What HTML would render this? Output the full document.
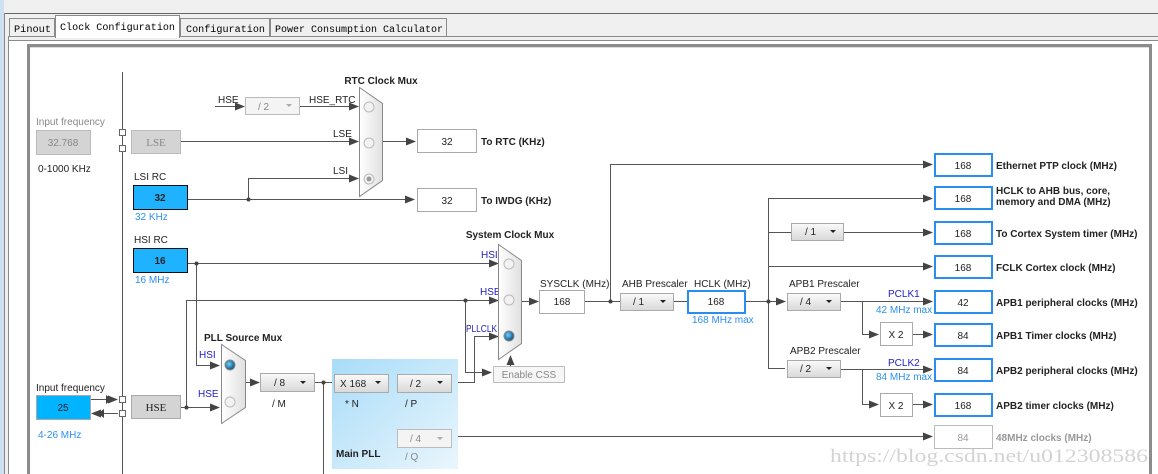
<!DOCTYPE html>
<html><head><meta charset="utf-8"><style>
body{margin:0;width:1158px;height:474px;overflow:hidden;background:#f0f0f0;}
svg{display:block}
.t{font-family:"Liberation Sans",sans-serif;font-size:10px;fill:#222}
.b{font-weight:bold}
.tab{font-family:"Liberation Mono",monospace;font-size:10px;fill:#000}
.g{fill:#888}
.bl{fill:#2b8ff0}
.pu{fill:#2020c0}
</style></head><body>
<svg width="1158" height="474" viewBox="0 0 1158 474">
<defs>
<marker id="a" markerWidth="10" markerHeight="8" refX="9" refY="4" orient="auto" markerUnits="userSpaceOnUse"><path d="M0,0 L10,4 L0,8z" fill="#444"/></marker>
<linearGradient id="dd" x1="0" y1="0" x2="0" y2="1"><stop offset="0" stop-color="#fafafa"/><stop offset="1" stop-color="#d8d8d8"/></linearGradient>
<linearGradient id="pll" x1="0" y1="0" x2="1" y2="1"><stop offset="0" stop-color="#a8dcf8"/><stop offset="1" stop-color="#eaf6fd"/></linearGradient>
<linearGradient id="mux" x1="0" y1="0" x2="1" y2="0"><stop offset="0" stop-color="#ffffff"/><stop offset="1" stop-color="#e0e0e0"/></linearGradient>
<radialGradient id="rb" cx="0.4" cy="0.4" r="0.6"><stop offset="0" stop-color="#6fd0ff"/><stop offset="1" stop-color="#0a5080"/></radialGradient>
</defs>
<rect x="0" y="0" width="1158" height="474" fill="#f0f0f0"/>
<line x1="5" y1="13.5" x2="1158" y2="13.5" stroke="#666"/>
<rect x="0" y="0" width="4" height="474" fill="#cfe0f0"/>
<line x1="4.5" y1="13" x2="4.5" y2="474" stroke="#888"/>
<line x1="8" y1="36.5" x2="1158" y2="36.5" stroke="#8a8a8a"/>
<line x1="8" y1="40.5" x2="1158" y2="40.5" stroke="#8a8a8a"/>
<rect x="8" y="41" width="1150" height="433" fill="#fff"/>
<line x1="8.5" y1="37" x2="8.5" y2="474" stroke="#8a8a8a"/>
<rect x="9.5" y="18.5" width="45" height="18" fill="#f0f0f0" stroke="#8a8a8a"/>
<text class="tab" x="14" y="32" textLength="37" lengthAdjust="spacingAndGlyphs">Pinout</text>
<rect x="55.5" y="15.5" width="124" height="22" fill="#fff" stroke="#8a8a8a"/>
<line x1="56" y1="37" x2="179" y2="37" stroke="#fff" stroke-width="2"/>
<text class="tab" x="60" y="30" textLength="115" lengthAdjust="spacingAndGlyphs">Clock Configuration</text>
<rect x="180.5" y="18.5" width="89" height="18" fill="#f0f0f0" stroke="#8a8a8a"/>
<text class="tab" x="186" y="32" textLength="79" lengthAdjust="spacingAndGlyphs">Configuration</text>
<rect x="270.5" y="18.5" width="176" height="18" fill="#f0f0f0" stroke="#8a8a8a"/>
<text class="tab" x="275" y="32" textLength="168" lengthAdjust="spacingAndGlyphs">Power Consumption Calculator</text>
<path d="M28.5,474 V45.5 H1150.5 V474" fill="none" stroke="#8c8c8c" stroke-width="3"/>
<line x1="30" y1="47.5" x2="1149" y2="47.5" stroke="#ddd"/>

<g fill="none" stroke="#555" stroke-width="1">
<line x1="122.5" y1="72" x2="122.5" y2="474"/>
<line x1="215" y1="106.5" x2="244" y2="106.5" marker-end="url(#a)"/>
<line x1="300" y1="106.5" x2="358" y2="106.5" marker-end="url(#a)"/>
<line x1="181" y1="141.5" x2="358" y2="141.5" marker-end="url(#a)"/>
<line x1="188" y1="199.5" x2="414" y2="199.5" marker-end="url(#a)"/>
<polyline points="248.5,199 248.5,178.5 358,178.5" marker-end="url(#a)"/>
<line x1="383" y1="141.5" x2="415" y2="141.5" marker-end="url(#a)"/>
<line x1="188" y1="263.5" x2="498" y2="263.5" marker-end="url(#a)"/>
<polyline points="196.5,263 196.5,365.5 219,365.5" marker-end="url(#a)"/>
<polyline points="186.5,407 186.5,300.5 498,300.5" marker-end="url(#a)"/>
<line x1="181" y1="407.5" x2="219" y2="407.5" marker-end="url(#a)"/>
<polyline points="465.5,300 465.5,372.5 491,372.5" marker-end="url(#a)"/>
<polyline points="452,382.5 474.5,382.5 474.5,336.5 498,336.5" marker-end="url(#a)"/>
<line x1="510.5" y1="366" x2="510.5" y2="356" marker-end="url(#a)"/>
<line x1="522" y1="301.5" x2="538" y2="301.5" marker-end="url(#a)"/>
<line x1="246" y1="382.5" x2="259" y2="382.5" marker-end="url(#a)"/>
<line x1="315" y1="382.5" x2="334" y2="382.5"/>
<line x1="323.5" y1="382" x2="323.5" y2="474"/>
<line x1="389" y1="382.5" x2="397" y2="382.5"/>
<polyline points="390.5,382 390.5,438.5 397,438.5"/>
<line x1="452" y1="436.5" x2="932" y2="436.5" marker-end="url(#a)"/>
<line x1="585" y1="301.5" x2="620" y2="301.5"/>
<polyline points="610.5,301 610.5,164.5 932,164.5" marker-end="url(#a)"/>
<line x1="674" y1="301.5" x2="687" y2="301.5"/>
<line x1="746" y1="301.5" x2="785" y2="301.5" marker-end="url(#a)"/>
<polyline points="785,368.5 768.5,368.5 768.5,198.5 932,198.5" marker-end="url(#a)"/>
<line x1="768" y1="232.5" x2="791" y2="232.5"/>
<line x1="844" y1="232.5" x2="932" y2="232.5" marker-end="url(#a)"/>
<line x1="768" y1="266.5" x2="932" y2="266.5" marker-end="url(#a)"/>
<line x1="841" y1="301.5" x2="932" y2="301.5" marker-end="url(#a)"/>
<polyline points="862.5,301 862.5,334.5 878,334.5" marker-end="url(#a)"/>
<line x1="913" y1="334.5" x2="932" y2="334.5" marker-end="url(#a)"/>
<line x1="841" y1="369.5" x2="932" y2="369.5" marker-end="url(#a)"/>
<polyline points="862.5,369 862.5,404.5 878,404.5" marker-end="url(#a)"/>
<line x1="913" y1="404.5" x2="932" y2="404.5" marker-end="url(#a)"/>
<line x1="91" y1="399.5" x2="117" y2="399.5" marker-end="url(#a)"/>
<line x1="118" y1="413.5" x2="92" y2="413.5" marker-end="url(#a)"/>
</g>
<g fill="#444">
<circle cx="248.5" cy="199.5" r="2"/><circle cx="196.5" cy="263.5" r="2"/><circle cx="186.5" cy="407.5" r="2"/>
<circle cx="465.5" cy="300.5" r="2"/><circle cx="323.5" cy="382.5" r="2"/><circle cx="610.5" cy="301.5" r="2"/><circle cx="768.5" cy="301.5" r="2"/>
<path d="M106,395 L112,399.5 L106,404z"/><path d="M104,409 L98,413.5 L104,418z"/>
</g>
<g fill="#fff" stroke="#666"><rect x="119.5" y="129.5" width="6" height="6"/><rect x="119.5" y="145.5" width="6" height="6"/><rect x="119.5" y="396.5" width="6" height="6"/><rect x="119.5" y="410.5" width="6" height="6"/></g>

<text class="t g" x="36" y="125" font-size="9">Input frequency</text>
<rect x="36.5" y="130.5" width="54" height="24" fill="#d4d4d4" stroke="#bbb"/>
<text class="t g" x="63" y="146" text-anchor="middle" font-size="9">32.768</text>
<text class="t" x="38" y="172" font-size="9" fill="#555">0-1000 KHz</text>
<rect x="131.5" y="130.5" width="49" height="23" fill="#d4d4d4" stroke="#bbb"/>
<text x="156" y="146" text-anchor="middle" font-family="Liberation Serif,serif" font-size="11" fill="#888">LSE</text>
<text class="t" x="134" y="180">LSI RC</text>
<rect x="133.5" y="185.5" width="54" height="24" fill="#1eb2ff" stroke="#111"/>
<text class="t b" x="160" y="201" text-anchor="middle" font-family="Liberation Serif,serif">32</text>
<text class="t bl" x="135" y="220" font-size="9">32 KHz</text>
<text class="t" x="134" y="243">HSI RC</text>
<rect x="133.5" y="248.5" width="54" height="24" fill="#1eb2ff" stroke="#111"/>
<text class="t b" x="160" y="264" text-anchor="middle" font-family="Liberation Serif,serif">16</text>
<text class="t bl" x="135" y="283" font-size="9">16 MHz</text>
<text class="t" x="36" y="391" font-size="9">Input frequency</text>
<rect x="36.5" y="395.5" width="54" height="24" fill="#00b4ff" stroke="#aaa"/>
<text class="t" x="63" y="411" text-anchor="middle">25</text>
<text class="t bl" x="38" y="438" font-size="9">4-26 MHz</text>
<rect x="131.5" y="395.5" width="49" height="23" fill="#d4d4d4" stroke="#aaa"/>
<text x="156" y="411" text-anchor="middle" font-family="Liberation Serif,serif" font-size="11" fill="#222">HSE</text>

<text class="t" x="218" y="103" font-size="9">HSE</text>
<rect x="245.5" y="97.5" width="54" height="17" fill="#f4f4f4" stroke="#bbb"/>
<text class="t g" x="258" y="110">/ 2</text><path d="M286,104 l6,0 l-3,3z" fill="#aaa"/>
<text class="t" x="309" y="103" font-size="9">HSE_RTC</text>
<text class="t" x="333" y="137" font-size="9">LSE</text><text class="t" x="333" y="174" font-size="9">LSI</text>
<text class="t b" x="381" y="84" text-anchor="middle" fill="#555" font-size="9">RTC Clock Mux</text>
<path d="M359.5,87.5 L382.5,103.5 L382.5,180.5 L359.5,196.5z" fill="url(#mux)" stroke="#888"/>
<g stroke="#bbb" fill="#f2f2f2"><circle cx="369" cy="107" r="5"/><circle cx="369" cy="143" r="5"/><circle cx="369" cy="179" r="5"/></g><circle cx="369" cy="179" r="2.5" fill="#999"/>
<rect x="417.5" y="129.5" width="59" height="23" fill="#fff" stroke="#aaa"/><text class="t" x="447" y="145" text-anchor="middle" font-size="9">32</text>
<text class="t b" x="481" y="145" fill="#555" font-size="9">To RTC (KHz)</text>
<rect x="417.5" y="188.5" width="59" height="23" fill="#fff" stroke="#aaa"/><text class="t" x="447" y="204" text-anchor="middle" font-size="9">32</text>
<text class="t b" x="481" y="204" fill="#555" font-size="9">To IWDG (KHz)</text>

<text class="t b" x="510" y="238" text-anchor="middle" font-size="9">System Clock Mux</text>
<text class="t pu" x="481" y="258" font-size="9">HSI</text><text class="t pu" x="480" y="295" font-size="9">HSE</text><text class="t pu" x="466" y="332" font-size="9" textLength="31" lengthAdjust="spacingAndGlyphs">PLLCLK</text>
<path d="M498.5,244.5 L521.5,260.5 L521.5,343.5 L498.5,359.5z" fill="url(#mux)" stroke="#888"/>
<g stroke="#bbb" fill="#f2f2f2"><circle cx="509" cy="264" r="5"/><circle cx="509" cy="300" r="5"/></g>
<circle cx="509" cy="336" r="5" fill="url(#rb)" stroke="#888"/>
<rect x="493.5" y="366.5" width="71" height="16" fill="#f6f6f6" stroke="#bbb" rx="1"/><text class="t g" x="529" y="378" text-anchor="middle" font-size="9">Enable CSS</text>

<text class="t b" x="204" y="341" font-size="9">PLL Source Mux</text>
<text class="t pu" x="199" y="358" font-size="9">HSI</text><text class="t pu" x="198" y="397" font-size="9">HSE</text>
<path d="M221.5,344.5 L245.5,360.5 L245.5,407.5 L221.5,423.5z" fill="url(#mux)" stroke="#888"/>
<circle cx="230" cy="365" r="5" fill="url(#rb)" stroke="#888"/><circle cx="230" cy="402" r="5" fill="#f2f2f2" stroke="#bbb"/>
<rect x="260.5" y="373.5" width="54" height="18" fill="url(#dd)" stroke="#aaa"/><text class="t" x="274" y="386">/ 8</text><path d="M300,381 l6,0 l-3,3z" fill="#222"/>
<text class="t" x="272" y="407">/ M</text>
<rect x="332" y="359" width="126" height="110" fill="url(#pll)"/>
<rect x="334.5" y="374.5" width="54" height="18" fill="url(#dd)" stroke="#aaa"/><text class="t" x="340" y="387">X 168</text><path d="M375,381 l6,0 l-3,3z" fill="#222"/>
<text class="t" x="345" y="407">* N</text>
<rect x="397.5" y="374.5" width="54" height="18" fill="url(#dd)" stroke="#aaa"/><text class="t" x="410" y="387">/ 2</text><path d="M437,381 l6,0 l-3,3z" fill="#222"/>
<text class="t" x="405" y="407">/ P</text>
<rect x="397.5" y="429.5" width="54" height="18" fill="#f4f4f4" stroke="#bbb"/><text class="t g" x="410" y="442">/ 4</text><path d="M437,437 l6,0 l-3,3z" fill="#aaa"/>
<text class="t g" x="405" y="460">/ Q</text>
<text class="t b" x="336" y="457">Main PLL</text>

<text class="t" x="540" y="287" font-size="9">SYSCLK (MHz)</text>
<rect x="539.5" y="290.5" width="45" height="23" fill="#fff" stroke="#aaa"/><text class="t" x="562" y="305" text-anchor="middle" font-size="9">168</text>
<text class="t" x="622" y="287" font-size="9">AHB Prescaler</text>
<rect x="620.5" y="293.5" width="53" height="17" fill="url(#dd)" stroke="#aaa"/><text class="t" x="633" y="305">/ 1</text><path d="M660,300 l6,0 l-3,3z" fill="#222"/>
<text class="t" x="694" y="287" font-size="9">HCLK (MHz)</text>
<rect x="688" y="291" width="57" height="22" fill="#fff" stroke="#2a8ef0" stroke-width="2"/><text class="t" x="716" y="305" text-anchor="middle" font-size="9">168</text>
<text class="t bl" x="692" y="323" font-size="9">168 MHz max</text>
<rect x="791.5" y="223.5" width="52" height="17" fill="url(#dd)" stroke="#aaa"/><text class="t" x="805" y="235">/ 1</text><path d="M830,230 l6,0 l-3,3z" fill="#222"/>
<text class="t" x="789" y="287" font-size="9">APB1 Prescaler</text>
<rect x="787.5" y="293.5" width="53" height="17" fill="url(#dd)" stroke="#aaa"/><text class="t" x="800" y="305">/ 4</text><path d="M826,300 l6,0 l-3,3z" fill="#222"/>
<text class="t" x="790" y="354" font-size="9">APB2 Prescaler</text>
<rect x="787.5" y="360.5" width="53" height="17" fill="url(#dd)" stroke="#aaa"/><text class="t" x="800" y="372">/ 2</text><path d="M826,367 l6,0 l-3,3z" fill="#222"/>
<text class="t pu" x="888" y="297" font-size="9">PCLK1</text><text class="t bl" x="876" y="313" font-size="9">42 MHz max</text>
<text class="t pu" x="888" y="366" font-size="9">PCLK2</text><text class="t bl" x="876" y="380" font-size="9">84 MHz max</text>
<rect x="880.5" y="322.5" width="32" height="23" fill="#fff" stroke="#aaa"/><text class="t" x="896" y="338" text-anchor="middle" font-size="9">X 2</text>
<rect x="880.5" y="393.5" width="32" height="23" fill="#fff" stroke="#aaa"/><text class="t" x="896" y="409" text-anchor="middle" font-size="9">X 2</text>

<g fill="#fff" stroke="#2a8ef0" stroke-width="2">
<rect x="935" y="154" width="57" height="22"/><rect x="935" y="187" width="57" height="22"/><rect x="935" y="222" width="57" height="22"/><rect x="935" y="256" width="57" height="22"/>
<rect x="935" y="291" width="57" height="22"/><rect x="935" y="324" width="57" height="22"/><rect x="935" y="359" width="57" height="22"/><rect x="935" y="394" width="57" height="22"/>
</g>
<rect x="934.5" y="425.5" width="58" height="23" fill="#fff" stroke="#bbb"/>
<g class="t" font-size="9" text-anchor="middle">
<text x="963" y="169">168</text><text x="963" y="202">168</text><text x="963" y="237">168</text><text x="963" y="271">168</text>
<text x="963" y="306">42</text><text x="963" y="339">84</text><text x="963" y="374">84</text><text x="963" y="409">168</text><text x="963" y="441" fill="#999">84</text>
</g>
<g class="t b">
<text x="996" y="169">Ethernet PTP clock (MHz)</text>
<text x="996" y="194">HCLK to AHB bus, core,</text><text x="996" y="205">memory and DMA (MHz)</text>
<text x="996" y="237">To Cortex System timer (MHz)</text>
<text x="996" y="271">FCLK Cortex clock (MHz)</text>
<text x="996" y="306">APB1 peripheral clocks (MHz)</text>
<text x="996" y="339">APB1 Timer clocks (MHz)</text>
<text x="996" y="374">APB2 peripheral clocks (MHz)</text>
<text x="996" y="409">APB2 timer clocks (MHz)</text>
<text x="996" y="441" fill="#999">48MHz clocks (MHz)</text>
</g>
<text x="830" y="462" font-family="Liberation Serif,serif" font-size="19" fill="#c8c8c8" fill-opacity="0.8" textLength="318" lengthAdjust="spacingAndGlyphs">https://blog.csdn.net/u012308586</text>
</svg>
</body></html>
